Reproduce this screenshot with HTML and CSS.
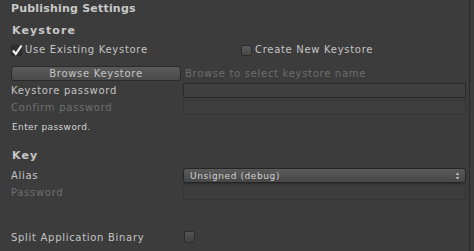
FILE: index.html
```html
<!DOCTYPE html>
<html lang="en">
<head>
  <meta charset="utf-8">
  <title>Publishing Settings</title>
  <link rel="stylesheet" href="styles.css">
</head>
<body>
<div class="panel">
  <h1 class="title">Publishing Settings</h1>

  <h2 class="section">Keystore</h2>

  <div class="toggles">
    <label class="toggle">
      <span class="check check--on">
        <svg width="12" height="12" viewBox="0 0 12 12">
          <path d="M2 6.5 L4.8 10 L10.5 1.5" fill="none" stroke="#f4f4f4" stroke-width="2.2" stroke-linejoin="miter"/>
        </svg>
      </span>
      <span>Use Existing Keystore</span>
    </label>
    <label class="toggle">
      <span class="check"></span>
      <span>Create New Keystore</span>
    </label>
  </div>

  <div class="row row--button">
    <button class="btn">Browse Keystore</button>
    <span class="hint">Browse to select keystore name</span>
  </div>

  <div class="row">
    <span class="label">Keystore password</span>
    <span class="field"></span>
  </div>
  <div class="row">
    <span class="label label--off">Confirm password</span>
    <span class="field field--off"></span>
  </div>

  <p class="note">Enter password.</p>

  <h2 class="section section--key">Key</h2>

  <div class="row row--alias">
    <span class="label">Alias</span>
    <span class="popup">
      <span>Unsigned (debug)</span>
      <svg class="popup__arrows" width="5" height="8" viewBox="0 0 5 8">
        <path d="M0.5 3 L2.5 0.5 L4.5 3 Z M0.5 5 L2.5 7.5 L4.5 5 Z" fill="#bdbdbd"/>
      </svg>
    </span>
  </div>
  <div class="row">
    <span class="label label--off">Password</span>
    <span class="field field--off"></span>
  </div>

  <div class="row row--split">
    <span class="label">Split Application Binary</span>
    <span class="check check--small"></span>
  </div>
</div>
</body>
</html>
```

FILE: styles.css
```css
body {
  margin: 0;
  background-color: #3c3c3c;
  font-family: 'DejaVu Sans', sans-serif;
  font-size: 10px;
  letter-spacing: 0.7px;
  color: #c4c4c4;
}

.panel {
  width: 458px;
  height: 251px;
  padding-left: 11px;
  border-right: 1px solid #2a2a2a;
  box-sizing: content-box;
}

.title {
  margin: 0;
  height: 16px;
  line-height: 17px;
  font-size: 11px;
  font-weight: bold;
  letter-spacing: 0.2px;
  color: #c8c8c8;
}

.section {
  margin: 7px 0 0 1px;
  height: 16px;
  line-height: 16px;
  font-size: 11px;
  font-weight: bold;
  letter-spacing: 1.1px;
  color: #c8c8c8;
}

.section--key {
  margin-top: 15px;
}

.toggles {
  display: grid;
  grid-template-columns: 230px 1fr;
  margin-top: 4px;
  height: 14px;
  line-height: 14px;
}

.toggle {
  display: flex;
  align-items: center;
  gap: 3px;
}

.check {
  display: inline-block;
  position: relative;
  flex: none;
  width: 11px;
  height: 11px;
  box-sizing: border-box;
  border: 1px solid #2c2c2c;
  border-radius: 2px;
  background: linear-gradient(#5c5c5c, #464646);
}

.check--on {
  background: #303030;
}

.check--on svg {
  position: absolute;
  left: -1px;
  top: -2px;
}

.check--small {
  width: 11px;
  height: 12px;
  background: linear-gradient(#545454, #404040);
}

.row {
  display: grid;
  grid-template-columns: 172px 283px;
  align-items: center;
  margin-top: 2px;
  height: 15px;
}

.row--button {
  margin-top: 9px;
  grid-template-columns: 174px 1fr;
}

.row--alias {
  margin-top: 4px;
}

.row--split {
  margin-top: 30px;
  height: 14px;
}

.row--split .check {
  margin-left: 1px;
}

.label {
  white-space: nowrap;
}

.label--off {
  color: #6f6f6f;
}

.btn {
  height: 15px;
  width: 170px;
  padding: 0;
  border: 1px solid #2b2b2b;
  border-radius: 3px;
  background: linear-gradient(#5a5a5a, #4a4a4a);
  color: #c4c4c4;
  font-family: 'DejaVu Sans', sans-serif;
  font-size: 10px;
  letter-spacing: 0.7px;
  line-height: 13px;
}

.hint {
  color: #6e6e6e;
  white-space: nowrap;
}

.field {
  height: 15px;
  box-sizing: border-box;
  border: 1px solid #2a2a2a;
  background: #3f3f3f;
}

.field--off {
  border-color: #353535;
  background: #3d3d3d;
}

.note {
  margin: 6px 0 0 1px;
  height: 12px;
  line-height: 12px;
  font-size: 9px;
  letter-spacing: 0.4px;
  color: #d4d4d4;
}

.popup {
  display: flex;
  align-items: center;
  justify-content: space-between;
  height: 15px;
  box-sizing: border-box;
  padding: 0 5px 0 6px;
  border: 1px solid #262626;
  border-radius: 3px;
  background: linear-gradient(#5a5a5a, #474747);
  color: #d0d0d0;
  font-size: 9px;
  letter-spacing: 0.6px;
  box-shadow: 0 1px 1px #2e2e2e;
}

.popup__arrows {
  display: block;
}
```
